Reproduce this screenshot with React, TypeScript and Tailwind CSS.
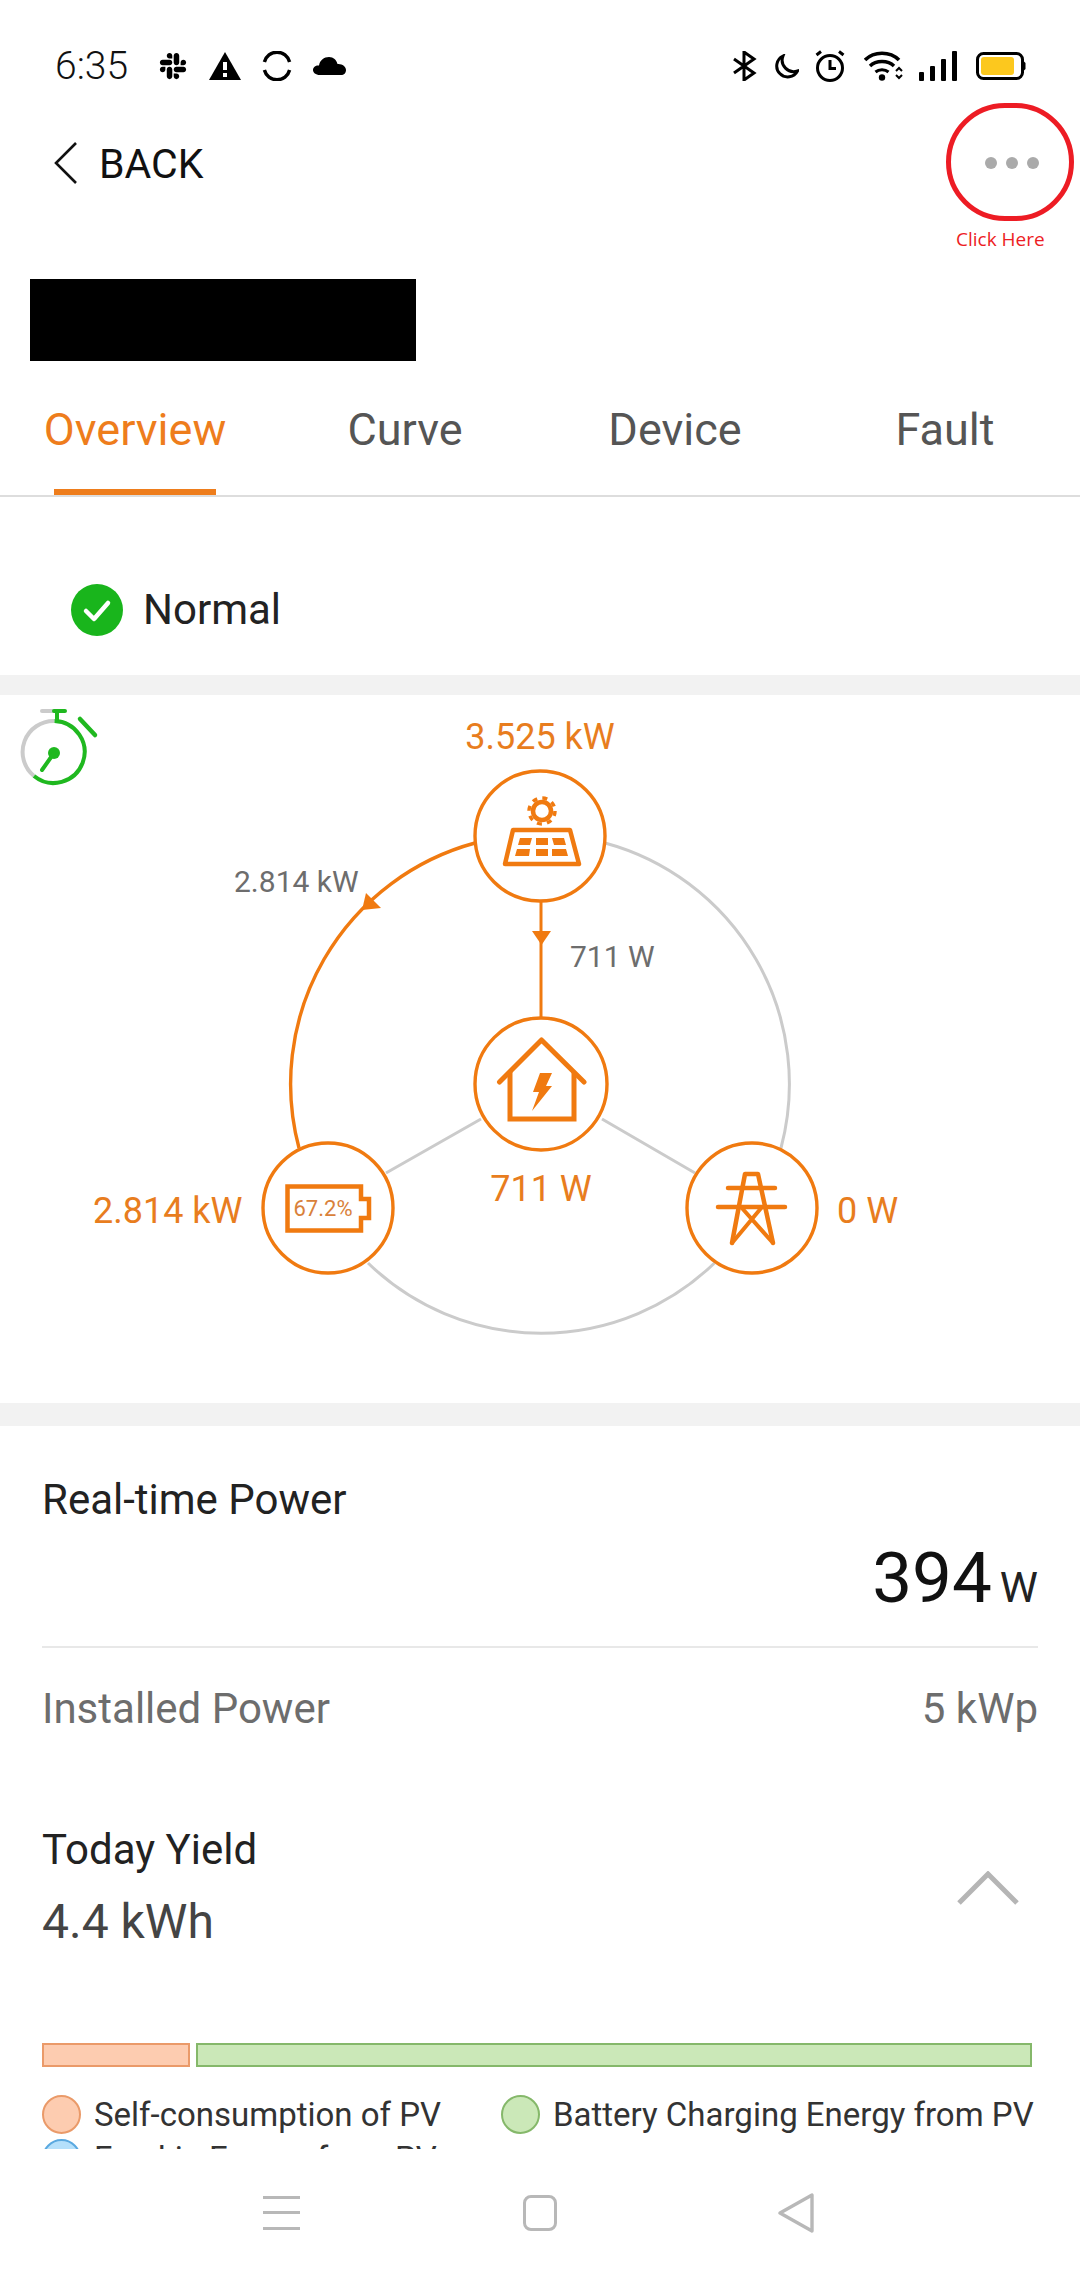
import { FaSlack } from "react-icons/fa";

function StatusBar() {
  return (
    <div className="flex h-[132px] items-center justify-between pl-[55px] pr-[54px]">
      <div className="flex items-center">
        <span className="w-[103px] text-[39px] font-light leading-[40px] text-[#111]">6:35</span>
        <FaSlack className="h-[30px] w-[30px] text-black" />
        <svg className="ml-[21px]" width="32" height="28" viewBox="0 0 32 28">
          <path d="M16 0 L32 28 L0 28 Z" fill="#000" />
          <rect x="14" y="10" width="4" height="8" fill="#fff" />
          <rect x="14" y="21" width="4" height="4" fill="#fff" />
        </svg>
        <svg className="ml-[21px]" width="30" height="30" viewBox="0 0 30 30" fill="none" stroke="#000" strokeWidth="3.4">
          <path d="M2.4 11 A13 13 0 0 1 27.6 11" />
          <path d="M2.4 19 A13 13 0 0 0 27.6 19" />
        </svg>
        <svg className="ml-[21px]" width="33" height="18" viewBox="0 0 33 18">
          <path d="M7 18 C2.5 18 0 15.5 0 13 C0 10 3 8 6 8.5 C7 3 11 0 16 0 C20.5 0 23.5 3 24.5 7 C29 6.5 33 9.5 33 13 C33 16 31 18 28 18 Z" fill="#000" />
        </svg>
      </div>
      <div className="flex items-center">
        <svg width="24" height="30" viewBox="0 0 24 30" fill="none" stroke="#000" strokeWidth="3">
          <path d="M1 8 L21 22 L11 29 L11 1 L21 8 L1 22" />
        </svg>
        <svg className="ml-[16px]" width="26" height="25" viewBox="0 0 26 25" fill="none" stroke="#000" strokeWidth="3">
          <path d="M10 2 A11 11 0 1 0 24.5 17 A11.5 11.5 0 0 1 10 2 Z" />
        </svg>
        <svg className="ml-[16px]" width="30" height="32" viewBox="0 0 30 32" fill="none" stroke="#000" strokeWidth="3">
          <circle cx="15" cy="18" r="12.5" />
          <path d="M15 10 V18.5 H21" />
          <path d="M1.5 5 L6 1.5 M28.5 5 L24 1.5" />
        </svg>
        <svg className="ml-[19px]" width="39" height="30" viewBox="0 0 39 30" fill="none" stroke="#000">
          <path d="M1 9 C10 0 26 0 35 9" strokeWidth="3.6" />
          <path d="M6 15 C12 9 24 9 30 15" strokeWidth="3.4" />
          <path d="M11.5 21 C15 18 21 18 24.5 21" strokeWidth="3" />
          <circle cx="18" cy="26.5" r="3.2" fill="#000" stroke="none" />
          <path d="M32 20 L35 17 L38 20 M32 24 L35 27 L38 24" strokeWidth="2" />
        </svg>
        <div className="ml-[16px] flex h-[30px] items-end gap-[6px]">
          <div className="h-[9px] w-[5px] rounded-[1px] bg-black" />
          <div className="h-[15px] w-[5px] rounded-[1px] bg-black" />
          <div className="h-[22px] w-[5px] rounded-[1px] bg-black" />
          <div className="h-[30px] w-[5px] rounded-[1px] bg-black" />
        </div>
        <svg className="ml-[19px]" width="50" height="28" viewBox="0 0 50 28">
          <rect x="1.5" y="1.5" width="45" height="25" rx="6" fill="#fff" stroke="#000" strokeWidth="3" />
          <rect x="5" y="5" width="33" height="18" rx="3" fill="#fcc81e" />
          <path d="M47.5 9 L49.5 11 V17 L47.5 19 Z" fill="#000" />
        </svg>
      </div>
    </div>
  );
}

function Diagram() {
  const orange = "#f07a10";
  const gray = "#cbcbcb";
  return (
    <div className="relative h-[708px] w-full font-normal">
      <svg className="absolute inset-0" width="1080" height="708" viewBox="0 695 1080 708" fill="none">
        {/* timer */}
        <path d="M54.5 721 A31 31 0 0 0 34 776" stroke={gray} strokeWidth="4" />
        <path d="M54.5 721 A31 31 0 1 1 34 776" stroke="#1fb81f" strokeWidth="4" />
        <path d="M42 711 H54" stroke={gray} strokeWidth="4" strokeLinecap="round" />
        <path d="M54 711 H65 M57 711 V720" stroke="#1fb81f" strokeWidth="4" strokeLinecap="round" />
        <path d="M80 719 L95 735" stroke="#1fb81f" strokeWidth="4.5" strokeLinecap="round" />
        <circle cx="54" cy="753" r="6" fill="#1fb81f" />
        <path d="M54 753 L42 770" stroke="#1fb81f" strokeWidth="4" strokeLinecap="round" />

        {/* ring */}
        <path d="M605 843 A249 249 0 0 1 781 1148" stroke={gray} strokeWidth="3" />
        <path d="M714.5 1263 A249 249 0 0 1 368 1263" stroke={gray} strokeWidth="3" />
        <path d="M475 843 A249 249 0 0 0 299 1148" stroke={orange} strokeWidth="3.4" />
        <path d="M366 893 L381 908 L362 910 Z" fill={orange} />
        {/* spokes */}
        <path d="M481 1119 L386 1173 M602 1119 L695 1173" stroke={gray} strokeWidth="3" />
        <path d="M541 901 V1017" stroke={orange} strokeWidth="3" />
        <path d="M532 931 H551 L541.5 945 Z" fill={orange} />

        {/* nodes */}
        <circle cx="540" cy="836" r="65" stroke={orange} strokeWidth="3.4" />
        <circle cx="541" cy="1084" r="66" stroke={orange} strokeWidth="3.4" />
        <circle cx="328" cy="1208" r="65" stroke={orange} strokeWidth="3.4" />
        <circle cx="752" cy="1208" r="65" stroke={orange} strokeWidth="3.4" />

        {/* solar */}
        <circle cx="542" cy="811" r="9" stroke={orange} strokeWidth="4.5" />
        <circle cx="542" cy="811" r="13" stroke={orange} strokeWidth="3.5" strokeDasharray="5 5.2" />
        <path d="M513 830 H570 L579 864 H505 Z" stroke={orange} strokeWidth="4.5" strokeLinejoin="round" />
        <path d="M520 838 H532 L530 845 H518 Z M536 838 H548 V845 H536 Z M552 838 H564 L566 845 H554 Z M517 849 H530 L529 856 H515 Z M536 849 H548 V856 H536 Z M552 849 H566 L568 856 H552 Z" fill={orange} />

        {/* home */}
        <path d="M499.5 1082 L541.5 1040 L584 1082" stroke={orange} strokeWidth="5" strokeLinecap="round" strokeLinejoin="round" />
        <path d="M510 1072 V1119 H574 V1072" stroke={orange} strokeWidth="5" />
        <path d="M540 1073 H552 L546 1086 H552 L532 1111 L539 1092 H533 Z" fill={orange} />

        {/* battery */}
        <path d="M287.5 1186.5 H361 V1199 H369 V1218 H361 V1230.5 H287.5 Z" stroke={orange} strokeWidth="4.5" />

        {/* tower */}
        <path d="M732 1243 L745 1174 H758 L773 1243" stroke={orange} strokeWidth="4.5" strokeLinejoin="round" strokeLinecap="round" />
        <path d="M728 1188 H775 M718 1207 H785" stroke={orange} strokeWidth="4.5" strokeLinecap="round" />
        <path d="M741 1207 L773 1243 M762 1207 L732 1243" stroke={orange} strokeWidth="4" />
      </svg>

      <span className="absolute left-[540px] top-[22px] -translate-x-1/2 whitespace-nowrap text-[36px] leading-[40px] text-[#e87d1e]">3.525 kW</span>
      <span className="absolute left-[234px] top-[167px] whitespace-nowrap text-[30px] leading-[40px] text-[#6d6d6d]">2.814 kW</span>
      <span className="absolute left-[570px] top-[242px] whitespace-nowrap text-[30px] leading-[40px] text-[#6d6d6d]">711 W</span>
      <span className="absolute left-[541px] top-[474px] -translate-x-1/2 whitespace-nowrap text-[36px] leading-[40px] text-[#e87d1e]">711 W</span>
      <span className="absolute left-[93px] top-[496px] whitespace-nowrap text-[36px] leading-[40px] text-[#e87d1e]">2.814 kW</span>
      <span className="absolute left-[837px] top-[496px] whitespace-nowrap text-[36px] leading-[40px] text-[#e87d1e]">0 W</span>
      <span className="absolute left-[323px] top-[494px] -translate-x-1/2 whitespace-nowrap text-[22px] leading-[40px] text-[#d9813a]">67.2%</span>
    </div>
  );
}

function LegendItem({ circle, label, width }: { circle: string; label: string; width: string }) {
  return (
    <div className={`flex h-[40px] items-center ${width}`}>
      <div className={`h-[39px] w-[39px] shrink-0 rounded-full border-2 ${circle}`} />
      <span className="ml-[13px] whitespace-nowrap pt-[2px] text-[33px] leading-[38px] text-[#333]">{label}</span>
    </div>
  );
}

export default function App() {
  return (
    <div className="relative flex h-[2280px] w-[1080px] flex-col overflow-hidden bg-white font-[family-name:Roboto,sans-serif]">
      <StatusBar />

      <div className="flex h-[62px] items-center justify-between pl-[54px] pr-[41px]">
        <div className="flex items-center">
          <svg width="24" height="42" viewBox="0 0 24 42" fill="none" stroke="#111" strokeWidth="2.6">
            <path d="M22 1 L2 21 L22 41" />
          </svg>
          <span className="ml-[21px] mt-[2px] text-[41px] leading-[48px] text-[#111]">BACK</span>
        </div>
        <div className="flex gap-[9px]">
          <div className="h-[12px] w-[12px] rounded-full bg-[#aaaaaa]" />
          <div className="h-[12px] w-[12px] rounded-full bg-[#aaaaaa]" />
          <div className="h-[12px] w-[12px] rounded-full bg-[#aaaaaa]" />
        </div>
      </div>

      <div className="ml-[30px] mt-[85px] h-[82px] w-[386px] bg-black" />

      <div className="grid h-[136px] grid-cols-4 border-b-2 border-[#dddddd]">
        <div className="flex flex-col items-center pt-[45px]">
          <span className="text-[45px] leading-[48px] text-[#ee7d1c]">Overview</span>
          <div className="mt-[35px] h-[6px] w-[162px] bg-[#ee7d1c]" />
        </div>
        <div className="flex flex-col items-center pt-[45px]">
          <span className="text-[45px] leading-[48px] text-[#555555]">Curve</span>
        </div>
        <div className="flex flex-col items-center pt-[45px]">
          <span className="text-[45px] leading-[48px] text-[#555555]">Device</span>
        </div>
        <div className="flex flex-col items-center pt-[45px]">
          <span className="text-[45px] leading-[48px] text-[#555555]">Fault</span>
        </div>
      </div>

      <div className="flex h-[178px] items-center pl-[71px] pt-[47px]">
        <svg width="52" height="52" viewBox="0 0 52 52" fill="none">
          <circle cx="26" cy="26" r="26" fill="#19b51c" />
          <path d="M15 27 L23 35 L37 19" stroke="#fff" strokeWidth="4.5" strokeLinecap="round" strokeLinejoin="round" />
        </svg>
        <span className="ml-[20px] text-[42px] leading-[48px] text-[#222]">Normal</span>
      </div>

      <div className="h-[20px] bg-[#f2f2f2]" />
      <Diagram />
      <div className="h-[23px] bg-[#f2f2f2]" />

      <div className="flex flex-col px-[42px]">
        <div className="mt-[50px] text-[42px] leading-[48px] text-[#222]">Real-time Power</div>
        <div className="mt-[14px] flex h-[80px] items-baseline justify-end">
          <span className="text-[71px] leading-[80px] text-[#111]">394</span>
          <span className="ml-[8px] text-[43px] leading-[48px] text-[#222]">W</span>
        </div>
        <div className="mt-[28px] h-[2px] bg-[#e8e8e8]" />
        <div className="mt-[37px] flex items-center justify-between text-[42px] leading-[48px] text-[#6d6d6d]">
          <span>Installed Power</span>
          <span>5 kWp</span>
        </div>
        <div className="mt-[93px] flex items-center justify-between pr-[19px]">
          <div className="flex flex-col">
            <span className="text-[42px] leading-[48px] text-[#222]">Today Yield</span>
            <span className="mt-[20px] text-[48px] leading-[56px] text-[#444]">4.4 kWh</span>
          </div>
          <svg width="62" height="34" viewBox="0 0 62 34" fill="none" stroke="#b5b5b5" strokeWidth="5">
            <path d="M2 32 L31 3 L60 32" />
          </svg>
        </div>
        <div className="mt-[93px] flex h-[24px] gap-[6px] pr-[6px]">
          <div className="w-[148px] border-2 border-[#ea9a69] bg-[#fdccb0]" />
          <div className="flex-1 border-2 border-[#85b86a] bg-[#cbe8b8]" />
        </div>
        <div className="mt-[27px] flex h-[55px] flex-col gap-[4px] overflow-hidden">
          <div className="flex">
            <LegendItem circle="border-[#ea9a69] bg-[#fdccb0]" label="Self-consumption of PV" width="w-[459px]" />
            <LegendItem circle="border-[#85b86a] bg-[#cbe8b8]" label="Battery Charging Energy from PV" width="w-[530px]" />
          </div>
          <LegendItem circle="border-[#5aa9e0] bg-[#b5e0fb]" label="Feed-in Energy from PV" width="w-[459px]" />
        </div>
      </div>

      <div className="flex flex-1 items-center justify-center pb-[4px] pr-[4px]">
        <div className="flex h-[34px] w-[37px] flex-col justify-between">
          <div className="h-[3px] bg-[#b8b8b8]" />
          <div className="h-[3px] bg-[#b8b8b8]" />
          <div className="h-[3px] bg-[#b8b8b8]" />
        </div>
        <div className="ml-[223px] h-[36px] w-[34px] rounded-[8px] border-[3px] border-[#b8b8b8]" />
        <svg className="ml-[221px]" width="36" height="40" viewBox="0 0 36 40" fill="none" stroke="#b8b8b8" strokeWidth="3.4" strokeLinejoin="round">
          <path d="M34 2 V38 L2 20 Z" />
        </svg>
      </div>

      <div className="absolute left-[946px] top-[103px] h-[118px] w-[128px] rounded-full border-[5px] border-[#ed1c24]" />
      <span className="absolute left-[956px] top-[226px] whitespace-nowrap font-[family-name:'Open_Sans',sans-serif] text-[19px] leading-[26px] text-[#ed1c24]">Click Here</span>
    </div>
  );
}
